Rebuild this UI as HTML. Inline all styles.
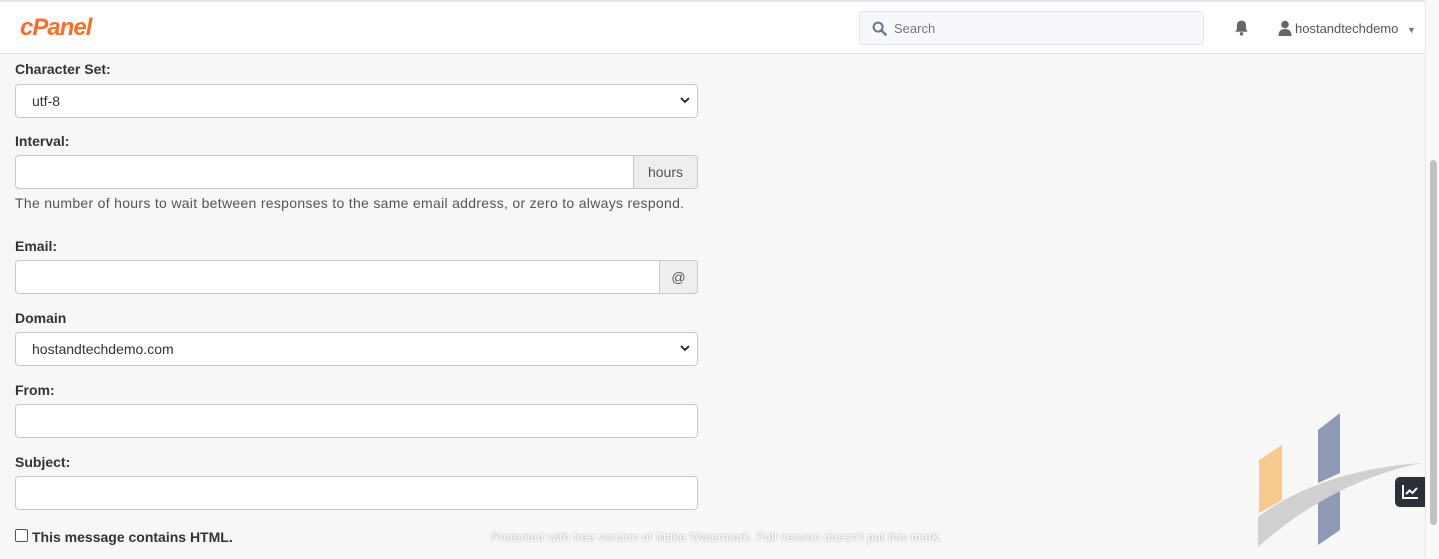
<!DOCTYPE html>
<html><head><meta charset="utf-8"><style>
*{box-sizing:border-box;margin:0;padding:0}
body{width:1439px;height:559px;overflow:hidden;background:#f7f7f7;font-family:"Liberation Sans",sans-serif;color:#333;position:relative}
.hdr{position:absolute;left:0;top:0;width:1425px;height:54px;background:#fff;border-top:2px solid #e5e5ea;border-bottom:1px solid #e1e1ea}
.logo{position:absolute;left:20px;top:12px;font:italic bold 24px "Liberation Sans",sans-serif;color:#ff6c2c;letter-spacing:-1px}
.search{position:absolute;left:859px;top:9px;width:345px;height:34px;background:#f7f8fb;border:1px solid #e3e6ee;border-radius:4px;font-size:13px;color:#777;padding:9px 0 0 34px}
.user{position:absolute;left:1295px;top:19px;font-size:13px;color:#555}
.lbl{position:absolute;left:15px;font-size:14px;font-weight:bold;color:#333}
.in{position:absolute;left:15px;width:683px;height:34px;background:#fff;border:1px solid #c8c8c8;border-radius:4px;font-size:14px;padding:8px 0 0 16px;color:#333}
.addon{position:absolute;right:-1px;top:-1px;height:34px;background:#eee;border:1px solid #c8c8c8;border-radius:0 4px 4px 0;font-size:14px;color:#555;text-align:center;padding-top:8px}
.chev{position:absolute;right:6px;top:9px}
.help{position:absolute;left:15px;top:195px;font-size:14px;color:#555;letter-spacing:0.3px}
.sb{position:absolute;left:1425px;top:0;width:14px;height:559px;background:#fafafa;border-left:1px solid #e8e8e8}
.thumb{position:absolute;left:1430px;top:160px;width:7px;height:365px;background:#c1c1c1;border-radius:4px}
</style></head><body>
<div class="hdr">
 <div class="logo">cPanel</div>
 <div class="search">Search
  <svg style="position:absolute;left:12px;top:9px" width="15" height="15" viewBox="0 0 16 16"><circle cx="6.5" cy="6.5" r="4.8" fill="none" stroke="#6b7894" stroke-width="2.2"/><path d="M10 10l4.5 4.5" stroke="#6b7894" stroke-width="2.6" stroke-linecap="round"/></svg>
 </div>
 <svg style="position:absolute;left:1234px;top:17px" width="15" height="17" viewBox="0 0 14 16"><path d="M7 1.5c-2.8 0-4.3 2-4.3 4.5v3.5L1.2 12h11.6l-1.5-2.5V6c0-2.5-1.5-4.5-4.3-4.5z" fill="#666"/><circle cx="7" cy="14" r="1.6" fill="#666"/></svg>
 <svg style="position:absolute;left:1278px;top:18px" width="14" height="16" viewBox="0 0 14 16"><circle cx="7" cy="4.5" r="3.8" fill="#666"/><path d="M0.5 16c0-5 2.5-7 6.5-7s6.5 2 6.5 7z" fill="#666"/></svg>
 <div class="user">hostandtechdemo <span style="font-size:9px;margin-left:5px;color:#777">▼</span></div>
</div>

<div class="lbl" style="top:61px">Character Set:</div>
<div class="in" style="top:84px">utf-8<svg class="chev" width="12" height="12" viewBox="0 0 12 12"><path d="M2 4l4 4 4-4" fill="none" stroke="#222" stroke-width="1.8"/></svg></div>

<div class="lbl" style="top:133px">Interval:</div>
<div class="in" style="top:155px"><div class="addon" style="width:65px">hours</div></div>
<div class="help">The number of hours to wait between responses to the same email address, or zero to always respond.</div>

<div class="lbl" style="top:238px">Email:</div>
<div class="in" style="top:260px"><div class="addon" style="width:39px">@</div></div>

<div class="lbl" style="top:310px">Domain</div>
<div class="in" style="top:332px">hostandtechdemo.com<svg class="chev" width="12" height="12" viewBox="0 0 12 12"><path d="M2 4l4 4 4-4" fill="none" stroke="#222" stroke-width="1.8"/></svg></div>

<div class="lbl" style="top:382px">From:</div>
<div class="in" style="top:404px"></div>

<div class="lbl" style="top:454px">Subject:</div>
<div class="in" style="top:476px"></div>

<div style="position:absolute;left:15px;top:529px;width:13px;height:13px;border:1px solid #555;border-radius:2px;background:#fff"></div>
<div class="lbl" style="left:32px;top:529px">This message contains HTML.</div>
<div style="position:absolute;left:491px;top:530px;font-size:12px;letter-spacing:0.2px;color:#fff;text-shadow:0 0 2px #999">Protected with free version of Make Watermark. Full version doesn't put this mark.</div>

<svg style="position:absolute;left:1250px;top:405px" width="175" height="154" viewBox="0 0 175 154">
 <polygon points="9,55 32,40 32,95 9,108" fill="#f6c98c"/>
 <polygon points="68,25 90,8 90,68 68,78" fill="#8d99b5"/>
 <polygon points="68,98 90,85 90,125 68,140" fill="#8d99b5"/>
 <path d="M8 112 C50 80 110 62 172 58 C120 68 60 95 8 142 Z" fill="#d0d0d0"/>
</svg>
<div style="position:absolute;left:1395px;top:477px;width:30px;height:30px;background:#2b2f38;border-radius:5px 0 0 5px"><svg style="position:absolute;left:7px;top:7px" width="17" height="15" viewBox="0 0 17 15"><path d="M1 1v13h15" fill="none" stroke="#fff" stroke-width="2"/><path d="M4 10l3.5-3.5 3 2.5 4.5-5" fill="none" stroke="#fff" stroke-width="2"/></svg></div>

<div class="sb"></div><div class="thumb"></div>
</body></html>
